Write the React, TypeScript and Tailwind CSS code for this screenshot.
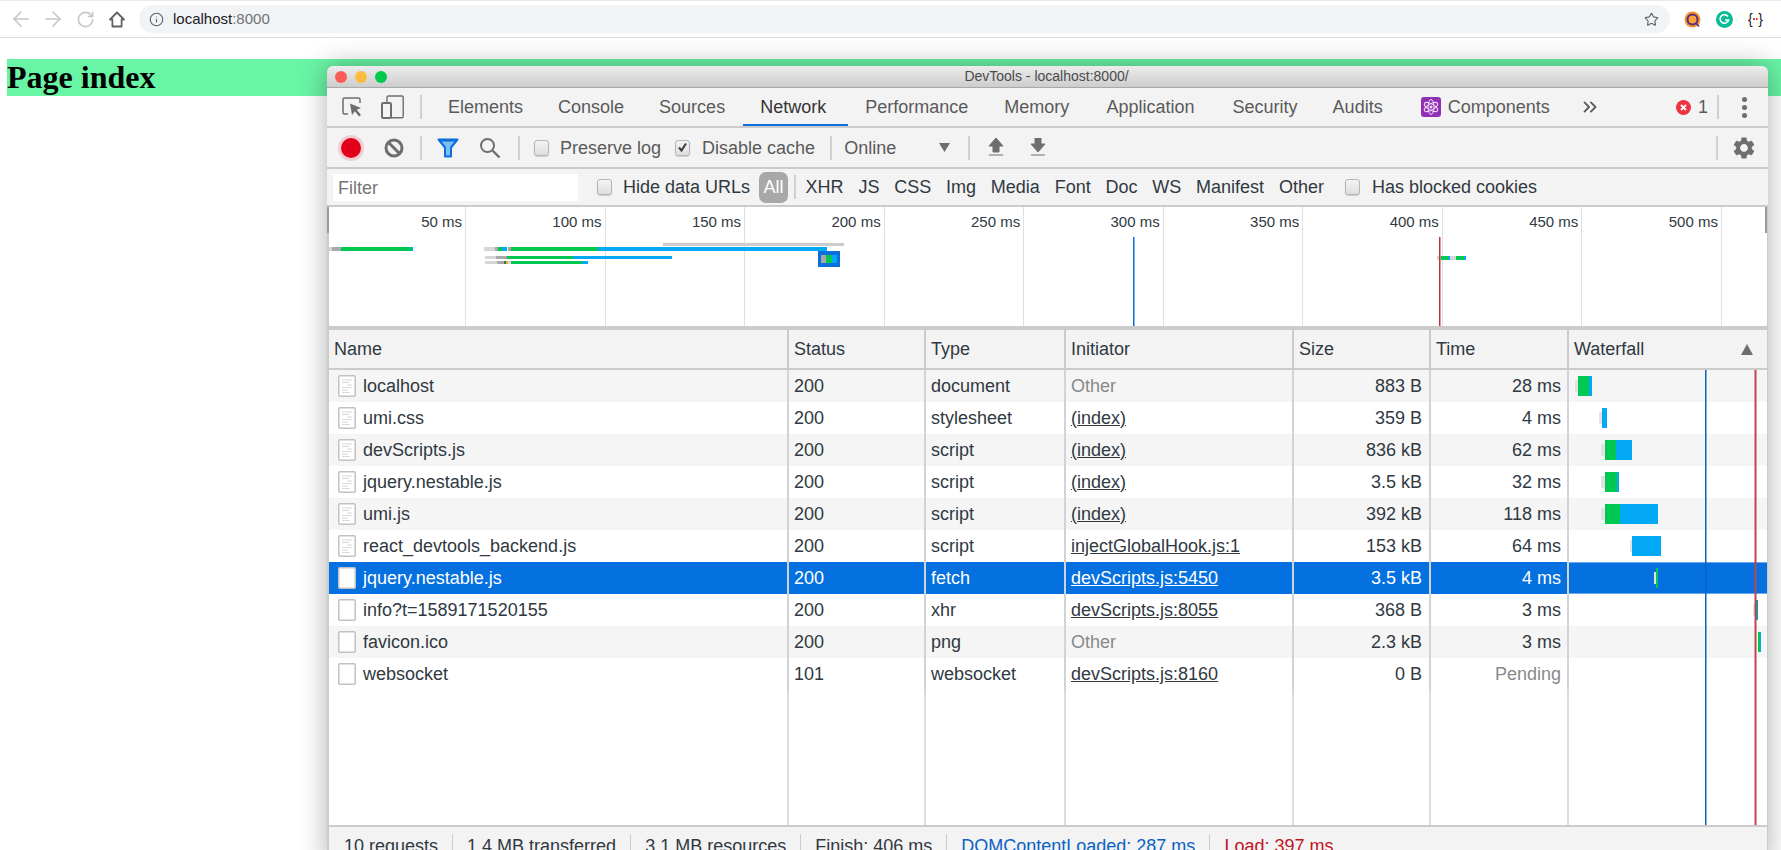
import React from 'react';
import { ArrowLeft, ArrowRight, RotateCw, Info, Star, ChevronsRight } from 'lucide-react';
import { MdSettings } from 'react-icons/md';

const GREEN = '#00c853';
const BLUE = '#03a9f4';
const LIGHT = '#d6d6d6';
const GRAY = '#a8a8a8';

const GRID = 'grid grid-cols-[460px_137px_140px_228px_137px_138px_198px]';

type Tab = { label: string; extra?: string; active?: boolean };

const tabs: Tab[] = [
  { label: 'Elements' },
  { label: 'Console' },
  { label: 'Sources' },
  { label: 'Network', extra: 'pr-[21.5px]', active: true },
  { label: 'Performance', extra: 'pr-[18.5px]' },
  { label: 'Memory', extra: 'pr-[19.8px]' },
  { label: 'Application', extra: 'pr-[20.5px]' },
  { label: 'Security' },
  { label: 'Audits', extra: 'pr-[19px]' },
];

const filters = ['XHR', 'JS', 'CSS', 'Img', 'Media', 'Font', 'Doc', 'WS', 'Manifest', 'Other'];

const ticks = ['50 ms', '100 ms', '150 ms', '200 ms', '250 ms', '300 ms', '350 ms', '400 ms', '450 ms', '500 ms'];

type Row = {
  name: string;
  status: string;
  type: string;
  initiator: string;
  link: boolean;
  size: string;
  time: string;
  doc: boolean;
  selected?: boolean;
};

const rows: Row[] = [
  { name: 'localhost', status: '200', type: 'document', initiator: 'Other', link: false, size: '883 B', time: '28 ms', doc: true },
  { name: 'umi.css', status: '200', type: 'stylesheet', initiator: '(index)', link: true, size: '359 B', time: '4 ms', doc: true },
  { name: 'devScripts.js', status: '200', type: 'script', initiator: '(index)', link: true, size: '836 kB', time: '62 ms', doc: true },
  { name: 'jquery.nestable.js', status: '200', type: 'script', initiator: '(index)', link: true, size: '3.5 kB', time: '32 ms', doc: true },
  { name: 'umi.js', status: '200', type: 'script', initiator: '(index)', link: true, size: '392 kB', time: '118 ms', doc: true },
  { name: 'react_devtools_backend.js', status: '200', type: 'script', initiator: 'injectGlobalHook.js:1', link: true, size: '153 kB', time: '64 ms', doc: true },
  { name: 'jquery.nestable.js', status: '200', type: 'fetch', initiator: 'devScripts.js:5450', link: true, size: '3.5 kB', time: '4 ms', doc: false, selected: true },
  { name: 'info?t=1589171520155', status: '200', type: 'xhr', initiator: 'devScripts.js:8055', link: true, size: '368 B', time: '3 ms', doc: false },
  { name: 'favicon.ico', status: '200', type: 'png', initiator: 'Other', link: false, size: '2.3 kB', time: '3 ms', doc: false },
  { name: 'websocket', status: '101', type: 'websocket', initiator: 'devScripts.js:8160', link: true, size: '0 B', time: 'Pending', doc: false },
];

// [x1, x2, color] in page coordinates
type Seg = [number, number, string];

const overviewBars: { y: number; h: number; segs: Seg[] }[] = [
  { y: 243, h: 3, segs: [[663, 844, '#cccccc']] },
  { y: 247, h: 4, segs: [[329, 332, LIGHT], [332, 341, GRAY], [341, 411, GREEN], [411, 413, BLUE]] },
  {
    y: 247,
    h: 4,
    segs: [[484, 495, LIGHT], [495, 498, GRAY], [498, 502, GREEN], [502, 507, BLUE], [508, 511, '#b59a9a'], [511, 598, GREEN], [598, 827, BLUE]],
  },
  { y: 256, h: 3, segs: [[485, 496, LIGHT], [496, 505, GRAY], [505, 507, '#b59a9a'], [507, 573, GREEN], [573, 672, BLUE]] },
  {
    y: 261,
    h: 3,
    segs: [[485, 497, LIGHT], [497, 504, GRAY], [504, 506, '#2e7d4f'], [506, 508, '#f5a623'], [508, 511, LIGHT], [511, 582, GREEN], [582, 588, BLUE]],
  },
  { y: 256, h: 4, segs: [[1437, 1441, LIGHT], [1441, 1448, GREEN], [1448, 1450, BLUE], [1450, 1456, LIGHT], [1456, 1464, GREEN], [1464, 1466, BLUE]] },
];

const waterfallBars: { row: number; stub?: [number, number]; segs: Seg[] }[] = [
  { row: 0, stub: [1575, 1578], segs: [[1578, 1589, GREEN], [1589, 1592, BLUE]] },
  { row: 1, stub: [1599, 1602], segs: [[1602, 1607, BLUE]] },
  { row: 2, stub: [1601, 1605], segs: [[1605, 1616, GREEN], [1616, 1632, BLUE]] },
  { row: 3, stub: [1601, 1605], segs: [[1605, 1617, GREEN], [1617, 1619, BLUE]] },
  { row: 4, stub: [1601, 1605], segs: [[1605, 1620, GREEN], [1620, 1658, BLUE]] },
  { row: 5, stub: [1630, 1632], segs: [[1632, 1661, BLUE]] },
  { row: 6, stub: [1654, 1656], segs: [[1656, 1658, GREEN]] },
  { row: 7, stub: [1753, 1756], segs: [[1756, 1758, '#00a5a5']] },
  { row: 8, segs: [[1758, 1760, GREEN], [1760, 1761, BLUE]] },
];

const Checkbox: React.FC<{ checked?: boolean }> = ({ checked }) => (
  <span className="flex w-[15px] h-[16px] shrink-0 items-center justify-center rounded-[3px] border border-[#b5b5b5] bg-gradient-to-b from-[#f4f4f4] to-[#dedede] shadow-[0_1px_1px_rgba(0,0,0,0.15)]">
    {checked && (
      <svg width="11" height="11" viewBox="0 0 11 11">
        <path d="M2 5.5 L4.5 8.5 L9 1.5" fill="none" stroke="#3c3c3c" strokeWidth="2" />
      </svg>
    )}
  </span>
);

const Divider: React.FC<{ className?: string }> = ({ className }) => (
  <span className={`w-[2px] h-[24px] shrink-0 bg-[#d0d0d0] ${className ?? ''}`} />
);

const DocIcon: React.FC<{ lines: boolean }> = ({ lines }) => (
  <svg width="18" height="22" viewBox="0 0 18 22" className="shrink-0">
    <rect x="0.75" y="0.75" width="16.5" height="20.5" rx="1" fill="#fff" stroke="#c2c2c2" strokeWidth="1.5" />
    {lines && (
      <path d="M4 5h10M4 7.5h7M9 10h5M4 12.5h10M4 15h6M4 17.5h8" stroke="#d8d8d8" strokeWidth="1" fill="none" />
    )}
  </svg>
);

const ReactBadge = () => (
  <svg width="20" height="20" viewBox="0 0 20 20" className="shrink-0">
    <rect x="0" y="0" width="20" height="20" rx="3" fill="#9030b4" />
    <g fill="none" stroke="#f0d8f5" strokeWidth="1">
      <ellipse cx="10" cy="10" rx="3" ry="7.5" />
      <ellipse cx="10" cy="10" rx="3" ry="7.5" transform="rotate(60 10 10)" />
      <ellipse cx="10" cy="10" rx="3" ry="7.5" transform="rotate(120 10 10)" />
    </g>
    <circle cx="10" cy="10" r="1.5" fill="#f0d8f5" />
  </svg>
);

const BrowserBar = () => (
  <div className="flex h-[38px] items-center border-t border-b border-t-[#e8eaed] border-b-[#dcdcdc] bg-white">
    <ArrowLeft size={24} strokeWidth={1.7} className="ml-[9px] text-[#c4c6c9]" />
    <ArrowRight size={24} strokeWidth={1.7} className="ml-[8px] text-[#c4c6c9]" />
    <RotateCw size={19} strokeWidth={2} className="ml-[11px] text-[#c4c6c9]" />
    <svg width="16" height="17" viewBox="0 0 16 17" className="ml-[14px]">
      <path d="M8 1.5 L15 8.5 H12.6 V15.5 H3.4 V8.5 H1 Z" fill="none" stroke="#5f6368" strokeWidth="1.8" strokeLinejoin="round" />
    </svg>
    <div className="ml-[14px] flex h-[28px] w-[1531px] items-center rounded-full bg-[#f1f3f4] pl-[10px] pr-[11px]">
      <Info size={15} strokeWidth={1.8} className="text-[#5f6368]" />
      <span className="ml-[9px] text-[15px] text-[#202124]">
        localhost<span className="text-[#6f7277]">:8000</span>
      </span>
      <Star size={15} strokeWidth={1.8} className="ml-auto text-[#5f6368]" />
    </div>
    <svg width="17" height="17" viewBox="0 0 17 17" className="ml-[14px]">
      <circle cx="8.5" cy="8.5" r="8" fill="#f4962a" />
      <circle cx="8.5" cy="8.5" r="5" fill="#f9a33a" stroke="#5b2a86" strokeWidth="2" />
      <path d="M12 12 L15 15.5" stroke="#5b2a86" strokeWidth="1.5" />
    </svg>
    <svg width="17" height="17" viewBox="0 0 17 17" className="ml-[15px]">
      <circle cx="8.5" cy="8.5" r="8.5" fill="#0bbd96" />
      <path d="M12 5.5 A4.3 4.3 0 1 0 12.6 9 H9" fill="none" stroke="#fff" strokeWidth="1.6" />
    </svg>
    <span className="ml-[15px] flex w-[15px] items-center justify-between text-[14px] leading-none text-[#222]">
      <span>{'{'}</span>
      <span className="h-[2px] w-[5px] border-t-2 border-dotted border-[#e53935]" />
      <span>{'}'}</span>
    </span>
  </div>
);

const TitleBar = () => (
  <div className="relative flex h-[22px] items-center rounded-t-[6px] border-b border-[#a9a9a9] bg-gradient-to-b from-[#ececec] to-[#cdcdcd] pl-[8px]">
    <span className="h-[12px] w-[12px] rounded-full bg-[#fc5b57]" />
    <span className="ml-[8px] h-[12px] w-[12px] rounded-full bg-[#fdbc40]" />
    <span className="ml-[8px] h-[12px] w-[12px] rounded-full bg-[#00ca4e]" />
    <span className="flex-1 pr-[62px] text-center text-[14px] text-[#4a4a4a]">DevTools - localhost:8000/</span>
  </div>
);

const TabBar = () => (
  <div className="flex h-[40px] items-center border-b-2 border-[#cbcbcb] bg-[#f3f3f3]">
    <svg width="20" height="20" viewBox="0 0 20 20" className="ml-[15px]">
      <path d="M6 17 H2.5 A1.5 1.5 0 0 1 1 15.5 V2.5 A1.5 1.5 0 0 1 2.5 1 H16.5 A1.5 1.5 0 0 1 18 2.5 V6" fill="none" stroke="#6e6e6e" strokeWidth="1.5" />
      <path d="M8 6.5 L19 11 L14.8 12.8 L19 18 L17 19.5 L12.9 14.2 L10 18 Z" fill="#6e6e6e" />
    </svg>
    <svg width="23" height="24" viewBox="0 0 23 24" className="ml-[19px]">
      <path d="M6 7 V2 A1.2 1.2 0 0 1 7.2 1 H21 A1.2 1.2 0 0 1 22.2 2 V21.5 A1.2 1.2 0 0 1 21 22.7 H10" fill="none" stroke="#6e6e6e" strokeWidth="1.4" />
      <rect x="1" y="8" width="9" height="15" rx="1.2" fill="none" stroke="#6e6e6e" strokeWidth="2" />
    </svg>
    <Divider className="ml-[16px]" />
    <div className="ml-[8.5px] flex h-full items-stretch">
      {tabs.map((tab) => (
        <span
          key={tab.label}
          className={`flex items-center pl-[17.5px] text-[18px] ${tab.extra ?? 'pr-[17.5px]'} ${
            tab.active ? 'border-b-2 border-[#0a6fdc] pt-[2px] text-[#333]' : 'text-[#5a5a5a]'
          }`}
        >
          {tab.label}
        </span>
      ))}
      <span className="ml-[19px] flex items-center gap-[7px] text-[18px] text-[#5a5a5a]">
        <ReactBadge />
        Components
      </span>
    </div>
    <ChevronsRight size={22} strokeWidth={2} className="ml-[29px] text-[#5a5a5a]" />
    <svg width="15" height="15" viewBox="0 0 15 15" className="ml-auto">
      <circle cx="7.5" cy="7.5" r="7.5" fill="#ee3340" />
      <path d="M5 5 L10 10 M10 5 L5 10" stroke="#fff" strokeWidth="1.8" />
    </svg>
    <span className="ml-[7px] text-[18px] text-[#5a5a5a]">1</span>
    <Divider className="ml-[9px]" />
    <span className="ml-[23px] mr-[21px] flex flex-col gap-[3px]">
      <span className="h-[5px] w-[5px] rounded-full bg-[#6e6e6e]" />
      <span className="h-[5px] w-[5px] rounded-full bg-[#6e6e6e]" />
      <span className="h-[5px] w-[5px] rounded-full bg-[#6e6e6e]" />
    </span>
  </div>
);

const ActionBar = () => (
  <div className="flex h-[41px] items-center border-b-2 border-[#cbcbcb] bg-[#f3f3f3] text-[18px] text-[#5a5a5a]">
    <span className="ml-[14px] h-[20px] w-[20px] rounded-full bg-[#e3001b] shadow-[0_0_0_3px_rgba(227,0,27,0.15)]" />
    <svg width="20" height="20" viewBox="0 0 20 20" className="ml-[23px]">
      <circle cx="10" cy="10" r="8" fill="none" stroke="#6e6e6e" strokeWidth="3" />
      <path d="M4.5 4.5 L15.5 15.5" stroke="#6e6e6e" strokeWidth="3" />
    </svg>
    <Divider className="ml-[16px]" />
    <svg width="22" height="20" viewBox="0 0 22 20" className="ml-[15px]">
      <path d="M1.5 1.5 H20.5 L14 9.5 V18.5 H8 V9.5 Z" fill="#7fbdf6" stroke="#0a6fdc" strokeWidth="2" strokeLinejoin="round" />
      <path d="M1.5 1.5 H20.5 L19 3.5 H3 Z" fill="#0a6fdc" />
    </svg>
    <svg width="22" height="22" viewBox="0 0 22 22" className="ml-[20px]">
      <circle cx="8.5" cy="8.5" r="6.5" fill="none" stroke="#6e6e6e" strokeWidth="2" />
      <path d="M13.5 13.5 L20.5 20.5" stroke="#6e6e6e" strokeWidth="2.4" />
    </svg>
    <Divider className="ml-[17px]" />
    <span className="ml-[14px]">
      <Checkbox />
    </span>
    <span className="ml-[11px] pt-[2px]">Preserve log</span>
    <span className="ml-[14px]">
      <Checkbox checked />
    </span>
    <span className="ml-[12px] pt-[2px]">Disable cache</span>
    <Divider className="ml-[15px]" />
    <span className="ml-[12px] pt-[2px]">Online</span>
    <svg width="11" height="9" viewBox="0 0 11 9" className="ml-[43px]">
      <path d="M0 0 H11 L5.5 9 Z" fill="#6e6e6e" />
    </svg>
    <Divider className="ml-[18px]" />
    <svg width="16" height="19" viewBox="0 0 16 19" className="ml-[18px]">
      <path d="M8 0 L15 8 H11 V14 H5 V8 H1 Z M1 17 H15" fill="#6e6e6e" stroke="#6e6e6e" strokeWidth="1" />
    </svg>
    <svg width="16" height="19" viewBox="0 0 16 19" className="ml-[26px]">
      <path d="M5 0 H11 V6 H15 L8 14 L1 6 H5 Z M1 17 H15" fill="#6e6e6e" stroke="#6e6e6e" strokeWidth="1" />
    </svg>
    <Divider className="ml-auto" />
    <MdSettings size={26} className="ml-[13px] mr-[11px] text-[#6e6e6e]" />
  </div>
);

const FilterBar = () => (
  <div className="flex h-[38px] items-center border-b-2 border-[#cbcbcb] bg-[#f3f3f3] text-[18px] text-[#303942]">
    <span className="ml-[6px] flex h-[27px] w-[245px] items-center bg-white pl-[5px] pt-[2px] text-[#757575]">Filter</span>
    <span className="ml-[19px]">
      <Checkbox />
    </span>
    <span className="ml-[11px]">Hide data URLs</span>
    <span className="ml-[9px] flex h-[31px] w-[29px] items-center justify-center rounded-[7px] bg-[#a8a8a8] text-white">All</span>
    <span className="ml-[6px] h-[24px] w-[1.5px] bg-[#d0d0d0]" />
    <div className="ml-[10px] flex items-center gap-[14.8px]">
      {filters.map((label) => (
        <span key={label}>{label}</span>
      ))}
    </div>
    <span className="ml-[21px]">
      <Checkbox />
    </span>
    <span className="ml-[12px]">Has blocked cookies</span>
  </div>
);

const Overview = () => (
  <div className="relative flex h-[119px] bg-white">
    {ticks.map((tick, i) => (
      <div
        key={tick}
        className={`shrink-0 border-r border-[#e0e0e0] pr-[3px] pt-[6px] text-right text-[15px] leading-[18px] text-[#303942] ${
          i === 0 ? 'w-[137px]' : 'w-[139.55px]'
        }`}
      >
        {tick}
      </div>
    ))}
    <span className="absolute left-[-2px] top-0 h-[26px] w-[2px] bg-[#9a9a9a]" />
    <span className="absolute right-0 top-0 h-[26px] w-[2px] bg-[#9a9a9a]" />
    <svg width="1438" height="119" className="absolute left-0 top-0">
      <g transform="translate(-329,-207)">
        {overviewBars.map((bar) =>
          bar.segs.map(([x1, x2, color]) => (
            <rect key={`${bar.y}-${x1}`} x={x1} y={bar.y} width={x2 - x1} height={bar.h} fill={color} />
          ))
        )}
        <rect x="818" y="251" width="22" height="16" fill="#0a6fdc" />
        <rect x="821" y="255" width="5" height="8" fill={GRAY} />
        <rect x="826" y="255" width="6" height="8" fill={GREEN} />
        <rect x="832" y="255" width="5" height="8" fill={BLUE} />
        <rect x="1133" y="237" width="1.5" height="89" fill="#0a6fdc" />
        <rect x="1439" y="237" width="1.5" height="89" fill="#c4303a" />
      </g>
    </svg>
  </div>
);

const HeaderRow = () => (
  <div className={`${GRID} h-[40px] border-y-0 border-b-2 border-[#cbcbcb] bg-[#f3f3f3] text-[18px] text-[#303942]`}>
    {['Name', 'Status', 'Type', 'Initiator', 'Size', 'Time'].map((label) => (
      <div key={label} className="flex items-center border-r-2 border-[#cbcbcb] pl-[5px]">
        {label}
      </div>
    ))}
    <div className="flex items-center justify-between pl-[5px] pr-[14px]">
      Waterfall
      <svg width="12" height="11" viewBox="0 0 12 11">
        <path d="M6 0 L12 11 H0 Z" fill="#6e6e6e" />
      </svg>
    </div>
  </div>
);

const TableRow: React.FC<{ row: Row; index: number }> = ({ row, index }) => {
  const bg = row.selected ? 'bg-[#0570e0] text-white' : index % 2 === 0 ? 'bg-[#f5f5f5] text-[#303942]' : 'bg-white text-[#303942]';
  const cell = 'flex items-center border-r-2 border-[#cfd4d9] px-[5px] whitespace-nowrap';
  const muted = !row.selected && !row.link ? 'text-[#8a8a8a]' : '';
  return (
    <div className={`${GRID} h-[32px] text-[18px] ${bg}`}>
      <div className={`${cell} pl-[9px]`}>
        <DocIcon lines={row.doc} />
        <span className="ml-[7px]">{row.name}</span>
      </div>
      <div className={cell}>{row.status}</div>
      <div className={cell}>{row.type}</div>
      <div className={`${cell} ${muted}`}>{row.link ? <span className="underline">{row.initiator}</span> : row.initiator}</div>
      <div className={`${cell} justify-end pr-[7px]`}>{row.size}</div>
      <div className={`${cell} justify-end pr-[6px] ${row.time === 'Pending' ? 'text-[#8a8a8a]' : ''}`}>{row.time}</div>
      <div />
    </div>
  );
};

const Waterfall = () => (
  <svg width="198" height="455" className="absolute right-0 top-0">
    <g transform="translate(-1569,-370)">
      <rect x="1569" y="562" width="198" height="1" fill="#6aa8ec" />
      <rect x="1569" y="593" width="198" height="1" fill="#6aa8ec" />
      {waterfallBars.map((bar) => {
        const y = 376 + bar.row * 32;
        return (
          <g key={bar.row}>
            {bar.stub && <rect x={bar.stub[0]} y={y + 4} width={bar.stub[1] - bar.stub[0]} height={12} fill="#e2e2e2" />}
            {bar.segs.map(([x1, x2, color]) => (
              <rect key={x1} x={x1} y={y} width={x2 - x1} height={20} fill={color} />
            ))}
          </g>
        );
      })}
      <rect x="1705" y="370" width="1.5" height="455" fill="#0a62c4" />
      <rect x="1754.5" y="370" width="2" height="455" fill="#c4444e" />
    </g>
  </svg>
);

const Footer = () => {
  const items = [
    { label: '10 requests', color: 'text-[#303942]' },
    { label: '1.4 MB transferred', color: 'text-[#303942]' },
    { label: '3.1 MB resources', color: 'text-[#303942]' },
    { label: 'Finish: 406 ms', color: 'text-[#303942]' },
    { label: 'DOMContentLoaded: 287 ms', color: 'text-[#0a62c4]' },
    { label: 'Load: 397 ms', color: 'text-[#c4121f]' },
  ];
  return (
    <div className="flex h-[40px] items-center border-t-2 border-[#cbcbcb] bg-[#f3f3f3] pl-[15px] text-[18px]">
      {items.map((item, i) => (
        <span key={item.label} className={`flex h-[24px] items-center whitespace-nowrap ${i > 0 ? 'border-l border-[#cbcbcb] pl-[14px]' : ''} pr-[14px] ${item.color}`}>
          {item.label}
        </span>
      ))}
    </div>
  );
};

export default function App() {
  return (
    <div className="relative h-[850px] w-full overflow-hidden bg-white font-['Liberation_Sans',Arial,sans-serif]">
      <BrowserBar />
      <div className="ml-[7px] mt-[21px] h-[37px] bg-[#69f5a6]">
        <h1 className="font-['Liberation_Serif','Times_New_Roman',serif] text-[32px] font-bold leading-[37px] text-black">Page index</h1>
      </div>

      {/* DevTools window floats over the page */}
      <div className="absolute left-[327px] top-[66px] w-[1441px] rounded-t-[6px] shadow-[0_0_28px_rgba(0,0,0,0.32)]">
        <TitleBar />
        <TabBar />
        <ActionBar />
        <FilterBar />
        <div className="border-l-2 border-r border-[#cbcbcb] bg-white">
          <Overview />
          <div className="h-[4px] bg-[#cbcbcb]" />
          <HeaderRow />
          <div className="relative">
            {rows.map((row, i) => (
              <TableRow key={`${row.name}-${i}`} row={row} index={i} />
            ))}
            <div className={`${GRID} h-[135px]`}>
              <div className="border-r-2 border-[#dcdcdc]" />
              <div className="border-r-2 border-[#dcdcdc]" />
              <div className="border-r-2 border-[#dcdcdc]" />
              <div className="border-r-2 border-[#dcdcdc]" />
              <div className="border-r-2 border-[#dcdcdc]" />
              <div className="border-r-2 border-[#dcdcdc]" />
              <div />
            </div>
            <Waterfall />
          </div>
          <Footer />
        </div>
      </div>
    </div>
  );
}
